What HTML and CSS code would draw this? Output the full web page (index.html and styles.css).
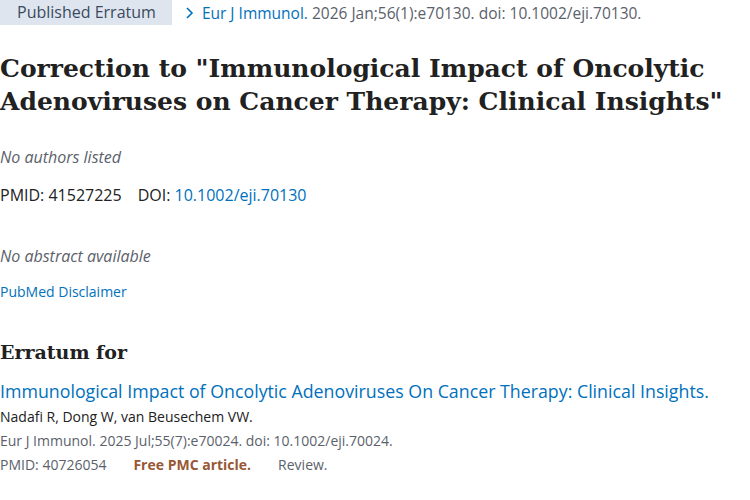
FILE: index.html
```html
<!DOCTYPE html>
<html lang="en">
<head>
  <meta charset="UTF-8">
  <meta name="viewport" content="width=device-width, initial-scale=1.0">
  <title>Correction to "Immunological Impact of Oncolytic Adenoviruses on Cancer Therapy: Clinical Insights"</title>
  <link rel="stylesheet" href="styles.css">
</head>
<body>

  <div class="top-bar">
    <span class="pub-type">Published Erratum</span>
    <span class="cite">
      <svg class="chevron" width="9" height="12" viewBox="0 0 9 12"><path d="M2 1l5 5-5 5" fill="none" stroke="#0071bc" stroke-width="1.6"/></svg>
      <a href="#" class="journal">Eur J Immunol.</a> 2026 Jan;56(1):e70130. doi: 10.1002/eji.70130.
    </span>
  </div>

  <h1 class="heading-title">Correction to "Immunological Impact of Oncolytic Adenoviruses on Cancer Therapy: Clinical Insights"</h1>

  <div class="authors">No authors listed</div>

  <div class="identifiers">
    <span class="id">PMID: 41527225</span>
    <span class="id">DOI: <a href="#">10.1002/eji.70130</a></span>
  </div>

  <div class="no-abstract">No abstract available</div>

  <a href="#" class="disclaimer">PubMed Disclaimer</a>

  <h2 class="section-title">Erratum for</h2>

  <div class="docsum">
    <a href="#" class="docsum-title">Immunological Impact of Oncolytic Adenoviruses On Cancer Therapy: Clinical Insights.</a>
    <div class="docsum-authors">Nadafi R, Dong W, van Beusechem VW.</div>
    <div class="docsum-cite">Eur J Immunol. 2025 Jul;55(7):e70024. doi: 10.1002/eji.70024.</div>
    <div class="docsum-meta">
      <span>PMID: 40726054</span>
      <span class="free">Free PMC article.</span>
      <span>Review.</span>
    </div>
  </div>

</body>
</html>
```

FILE: styles.css
```css
body {
    font-family: 'Open Sans', sans-serif;
    font-size: 16px;
    line-height: 24px;
    color: #212121;
    background-color: #fff;
    margin: 0;
}

a {
    color: #0071bc;
    text-decoration: none;
}

.top-bar {
    display: flex;
    align-items: center;
    height: 25px;
}

.pub-type {
    background-color: #dfe5ee;
    color: #3a4a5e;
    padding: 0 16px 0 17px;
    line-height: 25px;
}

.cite {
    color: #5b616b;
    font-size: 15.5px;
    margin-left: 13px;
}

.chevron {
    margin-right: 4px;
}

.heading-title {
    font-family: 'DejaVu Serif', serif;
    font-size: 25px;
    line-height: 33px;
    font-weight: bold;
    margin: 27px 0 0;
    max-width: 745px;
}

.authors,
.no-abstract {
    font-style: italic;
    color: #5b616b;
}

.authors {
    margin-top: 27px;
}

.identifiers {
    display: flex;
    gap: 16px;
    margin-top: 14px;
}

.no-abstract {
    margin-top: 37px;
}

.disclaimer {
    display: block;
    font-size: 14px;
    line-height: 21px;
    margin-top: 13px;
}

.section-title {
    font-family: 'DejaVu Serif', serif;
    font-size: 19px;
    line-height: 26px;
    font-weight: bold;
    margin: 37px 0 0;
}

.docsum {
    margin-top: 14px;
}

.docsum-title {
    display: block;
    font-size: 17.8px;
    line-height: 24px;
}

.docsum-authors {
    font-size: 14px;
    margin-top: 2px;
}

.docsum-cite,
.docsum-meta {
    font-size: 14px;
    color: #5b616b;
}

.docsum-meta {
    display: flex;
    gap: 27px;
}

.free {
    color: #985735;
    font-weight: bold;
}
```
